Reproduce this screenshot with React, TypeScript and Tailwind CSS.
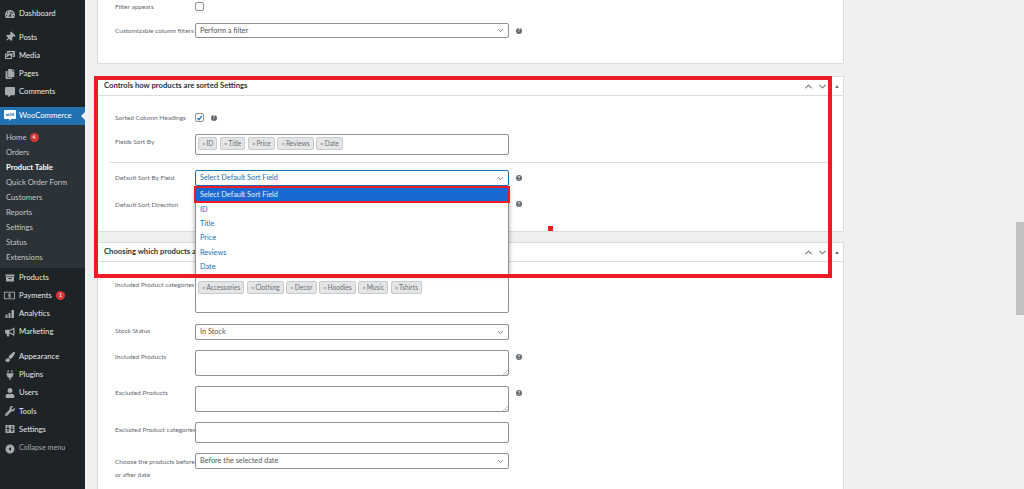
import React from "react"
import { ChevronDown, ChevronUp } from "lucide-react"
import {
  FaTachometerAlt,
  FaThumbtack,
  FaPhotoVideo,
  FaCopy,
  FaCommentAlt,
  FaBullhorn,
  FaPaintBrush,
  FaPlug,
  FaUser,
  FaWrench,
} from "react-icons/fa"

const ICON = "w-[10px] h-[10px] text-[#a7aaad]"

const BoxIcon = () => (
  <svg viewBox="0 0 20 20" className={ICON} fill="currentColor">
    <path d="M1 3h18v4H1zM2 8h16v9H2zm5 2v2h6v-2z" fillRule="evenodd" />
  </svg>
)
const DollarIcon = () => (
  <svg viewBox="0 0 20 20" className="w-[11px] h-[11px] text-[#a7aaad]" fill="none" stroke="currentColor" strokeWidth="1.6">
    <rect x="1" y="4" width="18" height="12" />
    <path d="M12.5 7.5H9a1.3 1.3 0 0 0 0 2.6h2a1.3 1.3 0 0 1 0 2.6H7.5M10 6v8" strokeWidth="1.4" />
  </svg>
)
const BarsIcon = () => (
  <svg viewBox="0 0 20 20" className={ICON} fill="currentColor">
    <path d="M1 11h4v7H1zM7 8h4v10H7zM13 2h5v16h-5z" />
  </svg>
)
const SlidersIcon = () => (
  <svg viewBox="0 0 20 20" className={ICON} fill="currentColor">
    <path d="M1 2h18v16H1zm4 2v4H3v2h2v6h2v-6h2V8H7V4zm8 0v6h-2v2h2v4h2v-4h2v-2h-2V4z" fillRule="evenodd" />
  </svg>
)
const CollapseIcon = () => (
  <svg viewBox="0 0 20 20" className="w-[10px] h-[10px] text-[#a7aaad]" fill="currentColor">
    <path d="M10 1a9 9 0 1 0 0 18 9 9 0 0 0 0-18zm2 5v8L7 10z" fillRule="evenodd" />
  </svg>
)
const WooIcon = () => (
  <svg viewBox="0 0 12 11" className="w-[12px] h-[11px]">
    <path d="M1 0h10a1 1 0 0 1 1 1v7a1 1 0 0 1-1 1H7.5L5 11l.5-2H1a1 1 0 0 1-1-1V1a1 1 0 0 1 1-1z" fill="#fff" />
    <path d="M2 3.5l.6 2.5.8-2 .8 2 .6-2.5M6 3.5h1.2v2H6zM8.6 3.5h1.2v2H8.6z" fill="none" stroke="#2271b1" strokeWidth="0.7" />
  </svg>
)

const MenuItem = ({
  icon,
  label,
  badge,
  className = "",
}: {
  icon: React.ReactNode
  label: string
  badge?: string
  className?: string
}) => (
  <div className={"flex h-[18.1px] items-center text-[#e6e7e8] " + className}>
    <span className="flex w-[19px] shrink-0 justify-center">{icon}</span>
    <span>{label}</span>
    {badge && (
      <span className="ml-[4px] flex h-[9px] w-[9px] items-center justify-center rounded-full bg-[#d63638] text-[5px] font-semibold text-white">
        {badge}
      </span>
    )}
  </div>
)

const SubItem = ({ label, bold, badge }: { label: string; bold?: boolean; badge?: string }) => (
  <div className={"flex h-[15px] items-center pl-[6px] " + (bold ? "font-bold text-white" : "text-[#c3c4c7]")}>
    <span>{label}</span>
    {badge && (
      <span className="ml-[3px] flex h-[9px] w-[9px] items-center justify-center rounded-full bg-[#d63638] text-[5px] font-semibold text-white">
        {badge}
      </span>
    )}
  </div>
)

const Sidebar = () => (
  <aside className="flex w-[85px] shrink-0 flex-col bg-[#1d2327] pt-[4.5px] text-[7.7px]">
    <MenuItem icon={<FaTachometerAlt className={ICON} />} label="Dashboard" />
    <MenuItem icon={<FaThumbtack className={ICON + " rotate-45"} />} label="Posts" className="mt-[5.7px]" />
    <MenuItem icon={<FaPhotoVideo className={ICON} />} label="Media" />
    <MenuItem icon={<FaCopy className={ICON} />} label="Pages" />
    <MenuItem icon={<FaCommentAlt className={ICON} />} label="Comments" />
    <div className="relative mt-[6px] flex h-[18px] items-center bg-[#2271b1] text-white">
      <span className="flex w-[19px] shrink-0 justify-center">
        <WooIcon />
      </span>
      <span>WooCommerce</span>
      <span className="absolute right-0 top-[5px] border-y-[4px] border-r-[4px] border-y-transparent border-r-[#f0f0f1]" />
    </div>
    <div className="bg-[#2c3338] pb-[2.5px] pt-[5.5px]">
      <SubItem label="Home" badge="4" />
      <SubItem label="Orders" />
      <SubItem label="Product Table" bold />
      <SubItem label="Quick Order Form" />
      <SubItem label="Customers" />
      <SubItem label="Reports" />
      <SubItem label="Settings" />
      <SubItem label="Status" />
      <SubItem label="Extensions" />
    </div>
    <MenuItem icon={<BoxIcon />} label="Products" className="mt-[1px]" />
    <MenuItem icon={<DollarIcon />} label="Payments" badge="1" />
    <MenuItem icon={<BarsIcon />} label="Analytics" />
    <MenuItem icon={<FaBullhorn className={ICON} />} label="Marketing" />
    <MenuItem icon={<FaPaintBrush className={ICON} />} label="Appearance" className="mt-[7px]" />
    <MenuItem icon={<FaPlug className={ICON} />} label="Plugins" />
    <MenuItem icon={<FaUser className={ICON} />} label="Users" />
    <MenuItem icon={<FaWrench className={ICON} />} label="Tools" />
    <MenuItem icon={<SlidersIcon />} label="Settings" />
    <MenuItem icon={<CollapseIcon />} label="Collapse menu" className="mt-[1px] !text-[#a7aaad] text-[7.2px]" />
  </aside>
)

const Help = ({ className = "" }: { className?: string }) => (
  <span
    className={
      "ml-[7px] flex h-[6px] w-[6px] shrink-0 items-center justify-center rounded-full bg-[#646970] text-[5px] font-bold leading-none text-white " +
      className
    }
  >
    ?
  </span>
)

const Label = ({ children, className = "" }: { children: React.ReactNode; className?: string }) => (
  <div className={"w-[80px] shrink-0 whitespace-nowrap text-[6.5px] leading-[9px] text-[#646970] " + className}>{children}</div>
)

const Row = ({ children, className = "" }: { children: React.ReactNode; className?: string }) => (
  <div className={"flex pl-[17px] " + className}>{children}</div>
)

const Select = ({ value, focus, h = "h-[16px]" }: { value: string; focus?: boolean; h?: string }) => (
  <div
    className={
      "flex w-[314px] items-center justify-between rounded-[2px] border bg-white pl-[4px] pr-[3px] text-[7.3px] " +
      h +
      (focus ? " border-[#2271b1] text-[#2271b1]" : " border-[#8c8f94] text-[#50575e]")
    }
  >
    <span className="pt-[1px]">{value}</span>
    <ChevronDown className="h-[9px] w-[9px] text-[#50575e]" strokeWidth={2} />
  </div>
)

const Chip = ({ label }: { label: string }) => (
  <span className="flex h-[13px] items-center gap-[1px] rounded-[2px] border border-[#c9cacc] bg-[#e4e5e6] px-[3px] text-[6.6px] text-[#6b7075]">
    <span className="text-[6px]">×</span>
    {label}
  </span>
)

const TextBox = ({
  h,
  chips,
  grip,
  pt = "pt-[2px]",
}: {
  h: string
  chips?: string[]
  grip?: boolean
  pt?: string
}) => (
  <div className={"relative flex w-[314px] items-start gap-[2.6px] rounded-[2px] border border-[#8c8f94] bg-white pl-[2px] " + pt + " " + h}>
    {chips?.map((c) => <Chip key={c} label={c} />)}
    {grip && (
      <svg viewBox="0 0 6 6" className="absolute bottom-0 right-0 h-[6px] w-[6px]" stroke="#8c8f94" strokeWidth="0.6">
        <path d="M1 6l5-5M3.5 6L6 3.5" />
      </svg>
    )}
  </div>
)

const PanelHeader = ({ title }: { title: string }) => (
  <div className="flex h-[19px] items-center justify-between border-b border-[#dcdcde] pl-[6px] pr-[4px]">
    <span className="text-[7.7px] font-bold text-[#2c3338]">{title}</span>
    <div className="flex items-center">
      <ChevronUp className="h-[11px] w-[11px] text-[#787c82]" strokeWidth={2.4} />
      <ChevronDown className="ml-[3px] h-[11px] w-[11px] text-[#787c82]" strokeWidth={2.4} />
      <span className="ml-[7px] border-x-[2.2px] border-b-[3px] border-x-transparent border-b-[#787c82]" />
    </div>
  </div>
)

const Main = () => (
  <main className="min-w-0 w-[747px] ml-[12px] flex flex-col">
    <section className="h-[64px] border-x border-b border-[#dcdcde] bg-white pt-[2px]">
      <Row className="items-center">
        <Label>Filter appears</Label>
        <div className="h-[9px] w-[9px] rounded-[2px] border border-[#8c8f94] bg-white" />
      </Row>
      <Row className="mt-[12px] items-center">
        <Label>Customizable column filters</Label>
        <Select value="Perform a filter" h="h-[15px]" />
        <Help />
      </Row>
    </section>

    <section className="relative z-10 mt-[12px] h-[156px] border border-[#dcdcde] bg-white">
      <PanelHeader title="Controls how products are sorted Settings" />
      <Row className="mt-[17px] items-center">
        <Label>Sorted Column Headings</Label>
        <div className="flex h-[9px] w-[9px] items-center justify-center rounded-[2px] border border-[#8c8f94] bg-white">
          <svg viewBox="0 0 10 10" className="h-[8px] w-[8px]" fill="none" stroke="#2271b1" strokeWidth="1.8">
            <path d="M2 5l2.2 2.4L8.4 2" />
          </svg>
        </div>
        <Help />
      </Row>
      <Row className="mt-[12px]">
        <Label className="pt-[3px]">Fields Sort By</Label>
        <TextBox h="h-[21px]" chips={["ID", "Title", "Price", "Reviews", "Date"]} />
      </Row>
      <div className="ml-[12px] mt-[7px] w-[723px] border-t border-[#dcdcde]" />
      <Row className="mt-[7px] items-center">
        <Label className="-mt-[2px]">Default Sort By Field</Label>
        <div className="relative">
          <Select value="Select Default Sort Field" focus />
          <div className="absolute left-0 top-full z-10 flex h-[88px] w-[314px] flex-col border-x border-[#8c8f94] bg-white pt-[2px] text-[7.3px] text-[#2271b1] shadow-[0_2px_5px_rgba(0,0,0,0.35)]">
            <div className="relative flex h-[14.4px] shrink-0 items-center bg-[#1a68d1] pl-[4px] pt-[1px] text-[#e8f0fa]">
              Select Default Sort Field
              <span className="absolute -left-[2px] -right-[2px] -top-[2px] -bottom-[1px] border-[2.5px] border-[#ed1c24]" />
            </div>
            {["ID", "Title", "Price", "Reviews", "Date"].map((o) => (
              <div key={o} className="flex h-[14.4px] shrink-0 items-center pl-[4px] pt-[1px]">
                {o}
              </div>
            ))}
          </div>
        </div>
        <Help />
      </Row>
      <Row className="mt-[10px] items-center">
        <Label>Default Sort Direction</Label>
        <Select value="" />
        <Help />
      </Row>
      <span className="absolute left-[450px] top-[149px] h-[5px] w-[5px] bg-[#ed1c24]" />
      <div className="pointer-events-none absolute -left-[4px] -top-[1px] z-20 h-[202px] w-[738px] border-4 border-[#ed1c24]" />
    </section>

    <section className="mt-[10px] flex-1 border-x border-t border-[#dcdcde] bg-white">
      <PanelHeader title="Choosing which products are displayed" />
      <Row className="mt-[15px]">
        <Label className="pt-[3px]">Included Product categories</Label>
        <TextBox h="h-[36px]" pt="pt-[3px]" chips={["Accessories", "Clothing", "Decor", "Hoodies", "Music", "Tshirts"]} />
      </Row>
      <Row className="mt-[11px]">
        <Label className="pt-[2px]">Stock Status</Label>
        <Select value="In Stock" />
      </Row>
      <Row className="mt-[10px]">
        <Label className="pt-[2px]">Included Products</Label>
        <TextBox h="h-[26px]" grip />
        <Help className="mt-[4px]" />
      </Row>
      <Row className="mt-[10px]">
        <Label className="pt-[2px]">Excluded Products</Label>
        <TextBox h="h-[26px]" grip />
        <Help className="mt-[4px]" />
      </Row>
      <Row className="mt-[10px]">
        <Label className="pt-[3px]">Excluded Product categories</Label>
        <TextBox h="h-[21px]" />
      </Row>
      <Row className="mt-[10px]">
        <Label className="pt-[2px] !leading-[13px]">
          Choose the products before
          <br />
          or after date
        </Label>
        <Select value="Before the selected date" />
      </Row>
    </section>
  </main>
)

export default function App() {
  return (
    <div className="flex h-[489px] w-[1024px] overflow-hidden bg-[#f0f0f1] font-['Lato',sans-serif]">
      <Sidebar />
      <Main />
      <div className="ml-auto w-[8px] shrink-0 pt-[222px]">
        <div className="h-[93px] bg-[#c1c1c1]" />
      </div>
    </div>
  )
}
